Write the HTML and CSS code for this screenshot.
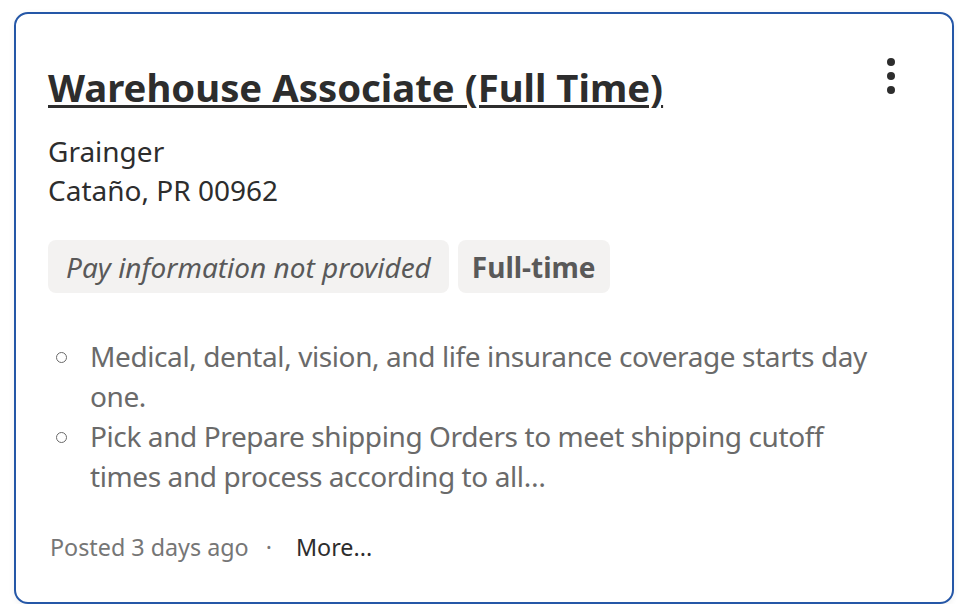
FILE: index.html
```html
<!DOCTYPE html>
<html>
<head>
<meta charset="utf-8">
<link rel="stylesheet" href="styles.css">
</head>
<body>
<div class="card">
  <div class="head">
    <h2 class="title"><a href="#">Warehouse Associate (Full Time)</a></h2>
    <button class="kebab" aria-label="More actions">
      <svg width="10" height="38" viewBox="0 0 10 38"><circle cx="5" cy="5" r="4"/><circle cx="5" cy="19" r="4"/><circle cx="5" cy="33" r="4"/></svg>
    </button>
  </div>
  <div class="company">Grainger</div>
  <div class="location">Cataño, PR 00962</div>
  <div class="tags">
    <span class="tag tag-pay">Pay information not provided</span>
    <span class="tag tag-type">Full-time</span>
  </div>
  <ul class="snippet">
    <li>Medical, dental, vision, and life insurance coverage starts day one.</li>
    <li>Pick and Prepare shipping Orders to meet shipping cutoff times and process according to all…</li>
  </ul>
  <div class="footer">
    <span class="posted">Posted 3 days ago</span>
    <span class="dot">·</span>
    <a class="more" href="#">More...</a>
  </div>
</div>
</body>
</html>
```
FILE: styles.css
```css
* { box-sizing: border-box; }
body {
  margin: 0;
  background: #fff;
  font-family: "Noto Sans", sans-serif;
  color: #2d2d2d;
}
.card {
  margin: 12px 0 0 14px;
  width: 940px;
  height: 592px;
  border: 2px solid #2557a7;
  border-radius: 14px;
  box-shadow: 0 2px 6px rgba(0,0,0,0.06);
  padding: 26px 32px 0 32px;
}
.head {
  display: flex;
  justify-content: space-between;
  align-items: flex-start;
}
.title {
  margin: 23px 0 0 0;
  font-size: 38.3px;
  font-weight: 700;
  line-height: 48px;
}
.title a {
  color: #2d2d2d;
  text-decoration: underline;
  text-decoration-thickness: 3px;
  text-underline-offset: 3px;
}
.kebab {
  border: 0;
  background: none;
  padding: 0;
  margin: 17px 24px 0 0;
  fill: #2d2d2d;
  display: flex;
}
.company, .location {
  font-size: 28px;
  line-height: 39px;
}
.company { margin-top: 21px; }
.tags {
  display: flex;
  gap: 9px;
  margin-top: 30px;
}
.tag {
  background: #f3f2f1;
  border-radius: 8px;
  height: 53px;
  display: flex;
  align-items: center;
  padding: 0 18px;
  font-size: 28px;
  color: #595959;
}
.tag-pay { font-style: italic; }
.tag-type { font-weight: 700; padding: 0 14px; }
.snippet {
  margin: 43px 0 0 0;
  padding: 0;
  list-style: none;
  color: #6a6a6a;
  font-size: 28px;
  line-height: 40px;
  letter-spacing: -0.4px;
  width: 837px;
}
.snippet li {
  display: flex;
}
.snippet li::before {
  content: "";
  flex: none;
  width: 9px;
  height: 9px;
  border: 1.6px solid #6a6a6a;
  border-radius: 50%;
  margin: 16px 23px 0 8px;
}
.footer {
  margin-top: 35px;
  padding-left: 2px;
  font-size: 23.3px;
  display: flex;
  align-items: center;
}
.posted { color: #767676; }
.dot { color: #767676; margin: 0 24px 0 17px; }
.more { color: #2d2d2d; text-decoration: none; }
```
